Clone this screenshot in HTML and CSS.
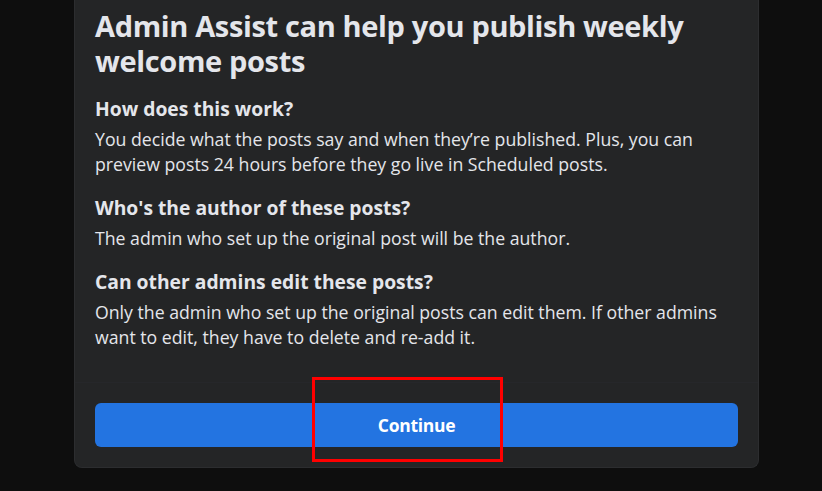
FILE: index.html
```html
<!DOCTYPE html>
<html lang="en">

<head>
  <title>Admin Assist</title>
  <link rel="stylesheet" href="styles.css">
</head>

<body>
  <div class="dialog">
    <h1 class="dialog-title">Admin Assist can help you publish weekly welcome posts</h1>

    <div class="faq">
      <h2>How does this work?</h2>
      <p>You decide what the posts say and when they’re published. Plus, you can preview posts 24 hours before they go live in Scheduled posts.</p>
    </div>

    <div class="faq">
      <h2>Who's the author of these posts?</h2>
      <p>The admin who set up the original post will be the author.</p>
    </div>

    <div class="faq">
      <h2>Can other admins edit these posts?</h2>
      <p>Only the admin who set up the original posts can edit them. If other admins want to edit, they have to delete and re-add it.</p>
    </div>

    <div class="dialog-footer">
      <button class="btn-primary">Continue</button>
    </div>
  </div>

  <div class="highlight"></div>
</body>

</html>
```

FILE: styles.css
```css
body {
  margin: 0;
  background-color: #0e0e0e;
  font-family: 'Open Sans', 'Noto Sans', Arial, sans-serif;
  color: #e4e6eb;
  position: relative;
  height: 491px;
  overflow: hidden;
}

.dialog {
  width: 685px;
  margin: -12px 0 0 74px;
  background: #242526;
  border: 1px solid #2c2d2f;
  border-top: none;
  border-radius: 8px;
  box-sizing: border-box;
  padding: 20px 0 0;
}

.dialog-title {
  margin: 0 20px 17px;
  font-size: 29px;
  line-height: 35px;
  font-weight: 700;
  letter-spacing: -0.35px;
}

.faq {
  margin: 0 20px 17px;
}

.faq h2 {
  margin: 0 0 5px;
  font-size: 19.3px;
  line-height: 27px;
  font-weight: 700;
}

.faq p {
  margin: 0;
  font-size: 17.7px;
  line-height: 25px;
  color: #e4e6eb;
}

.dialog-footer {
  margin-top: 32px;
  padding: 20px 20px 20px;
  border-top: 1px solid #26272a;
}

.btn-primary {
  display: block;
  width: 100%;
  height: 44px;
  border: none;
  border-radius: 6px;
  background: #2374e1;
  color: #fff;
  font-family: inherit;
  font-size: 17.5px;
  font-weight: 700;
  letter-spacing: -0.3px;
}

.highlight {
  position: absolute;
  left: 312px;
  top: 377px;
  width: 191px;
  height: 85px;
  box-sizing: border-box;
  border: 3px solid #f00;
}
```
